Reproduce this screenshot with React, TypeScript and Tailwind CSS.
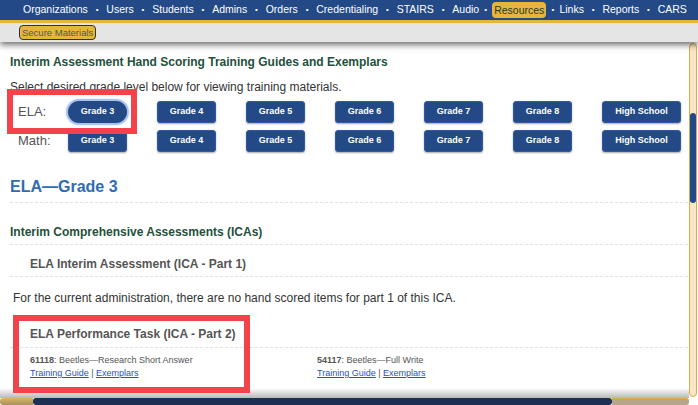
const navItems = ['Organizations', 'Users', 'Students', 'Admins', 'Orders', 'Credentialing', 'STAIRS', 'Audio', 'Resources', 'Links', 'Reports', 'CARS'];
const grades = ['Grade 3', 'Grade 4', 'Grade 5', 'Grade 6', 'Grade 7', 'Grade 8', 'High School'];

const GradeRow = ({ label, selected }: { label: string; selected?: boolean }) => (
  <div className="flex items-center h-[22px]">
    <span className="w-[68px] pl-[18px] text-[13px] text-[#555]">{label}</span>
    <div className="flex gap-[30px]">
      {grades.map((g, i) => (
        <button
          key={g}
          className={`h-[22px] text-[9px] font-bold text-white bg-[#234a87] ${g === 'High School' ? 'w-[79px]' : 'w-[59px]'} ${
            selected && i === 0
              ? 'rounded-full ring-2 ring-[#a9c2f2] shadow-[0_0_4px_#7fa3ea]'
              : 'rounded-[3px] border border-[#2f5aa0] shadow-[0_1px_2px_rgba(0,0,0,0.35)]'
          }`}
        >
          {g}
        </button>
      ))}
    </div>
  </div>
);

const Item = ({ code, title }: { code: string; title: string }) => (
  <div className="w-[287px] text-[9px] leading-[13px] text-[#555]">
    <div>
      <b>{code}</b>: {title}
    </div>
    <div>
      <a className="text-[#2a52b8] underline">Training Guide</a> | <a className="text-[#2a52b8] underline">Exemplars</a>
    </div>
  </div>
);

export default function App() {
  return (
    <div className="relative w-[698px] h-[405px] overflow-hidden bg-white flex flex-col" style={{ fontFamily: '"Liberation Sans", Arial, sans-serif' }}>
      {/* header */}
      <div className="relative z-10 shadow-[0_3px_6px_rgba(0,0,0,0.55)]">
        <div className="h-[20px] bg-[#234a87] flex items-center pl-[23px] text-[10.5px] text-white">
          {navItems.map((n, i) => (
            <div key={n} className="flex items-center">
              {i > 0 && <span className={`${n === 'Resources' || navItems[i - 1] === 'Resources' ? 'w-[13px]' : 'w-[18.5px]'} text-center text-[8px]`}>•</span>}
              {n === 'Resources' ? (
                <span className="bg-[#e6b53c] text-[#2d3a2a] rounded-[4px] px-[2px] h-[16px] leading-[16px]">{n}</span>
              ) : (
                <span>{n}</span>
              )}
            </div>
          ))}
        </div>
        <div className="h-[3px] bg-[#e6b53c]" />
        <div className="h-[19px] bg-[#e5e5e5] flex items-center pl-[19px]">
          <span className="h-[15px] px-[2px] leading-[13px] whitespace-nowrap bg-[#e6b53c] border border-[#333] rounded-[4px] text-[9.5px] text-[#555]">Secure Materials</span>
        </div>
      </div>

      <div className="flex flex-1 min-h-0">
        {/* content */}
        <div className="flex-1 pl-[10px] pr-[1px] pt-[12px]">
          <div className="text-[12px] leading-[16px] font-bold text-[#24503c]">Interim Assessment Hand Scoring Training Guides and Exemplars</div>
          <div className="mt-[9px] text-[12px] leading-[16px] text-[#333]">Select desired grade level below for viewing training materials.</div>
          <div className="-ml-[10px] mt-[6px] flex flex-col gap-[7px]">
            <GradeRow label="ELA:" selected />
            <GradeRow label="Math:" />
          </div>
          <div className="mt-[25px] pb-[5px] text-[16px] leading-[20px] font-bold text-[#2f6cb3] border-b border-dashed border-[#e2e2e2]">ELA—Grade 3</div>
          <div className="mt-[21px] pb-[4px] text-[12px] leading-[16px] font-bold text-[#24503c] border-b border-dashed border-[#e2e2e2]">Interim Comprehensive Assessments (ICAs)</div>
          <div className="pt-[11px] pb-[4px] pl-[20px] text-[12px] leading-[16px] font-bold text-[#555] border-b border-dashed border-[#e2e2e2]">ELA Interim Assessment (ICA - Part 1)</div>
          <div className="mt-[13px] pl-[3px] text-[12px] leading-[16px] text-[#333]">For the current administration, there are no hand scored items for part 1 of this ICA.</div>
          <div className="mt-[20px] pb-[5px] pl-[20px] text-[12px] leading-[16px] font-bold text-[#555] border-b border-dashed border-[#e2e2e2]">ELA Performance Task (ICA - Part 2)</div>
          <div className="mt-[6px] pl-[20px] flex">
            <Item code="61118" title="Beetles—Research Short Answer" />
            <Item code="54117" title="Beetles—Full Write" />
          </div>
        </div>
        {/* vertical scrollbar */}
        <div className="w-[9px] pt-[1px] pb-[1px] pr-[1px]">
          <div className="h-full rounded-[4px] border border-[#d9ad4e] bg-[#f7e7c4] pt-[69px]">
            <div className="h-[90px] rounded-[4px] bg-[#234a87]" />
          </div>
        </div>
      </div>

      {/* horizontal scrollbar */}
      <div className="h-[7px] flex pr-[9px]">
        <div className="w-[33px] bg-gradient-to-b from-[#d9b766] to-[#a89160] rounded-l-[3px]" />
        <div className="w-[579px] bg-[#1d2f52] rounded-[3px]" />
        <div className="flex-1 bg-[#b6a58a] border-t border-[#d9ad4e] rounded-r-[3px]" />
      </div>

      {/* bottom shadow */}
      <div className="absolute left-0 right-[9px] bottom-[7px] h-[10px] bg-gradient-to-b from-transparent to-[#9a9a9a]/70 pointer-events-none" />

      {/* annotation boxes */}
      <div className="absolute left-[7px] top-[89px] w-[130px] h-[45px] border-[6px] border-[#f2434a] pointer-events-none" />
      <div className="absolute left-[13px] top-[315px] w-[237px] h-[78px] border-[6px] border-[#f2434a] pointer-events-none" />
    </div>
  );
}
